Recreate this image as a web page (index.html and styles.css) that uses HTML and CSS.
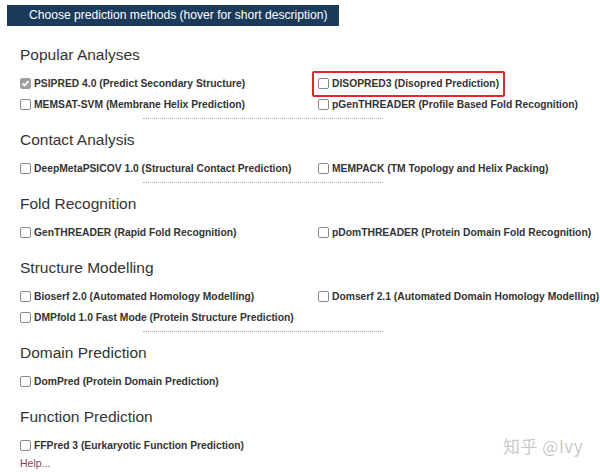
FILE: index.html
```html
<!DOCTYPE html>
<html>
<head>
<meta charset="utf-8">
<link rel="stylesheet" href="styles.css">
</head>
<body>
<div class="page">
  <div class="bar">Choose prediction methods (hover for short description)</div>

  <div class="section">
    <h2 class="title">Popular Analyses</h2>
    <div class="grid">
      <label class="item"><span class="box checked"><svg viewBox="0 0 10 10" width="9" height="9"><path d="M1.8 5.2 L4 7.4 L8.4 2.4" fill="none" stroke="#fff" stroke-width="1.8"/></svg></span>PSIPRED 4.0 (Predict Secondary Structure)</label>
      <label class="item highlight"><span class="box"></span>DISOPRED3 (Disopred Prediction)</label>
      <label class="item"><span class="box"></span>MEMSAT-SVM (Membrane Helix Prediction)</label>
      <label class="item"><span class="box"></span>pGenTHREADER (Profile Based Fold Recognition)</label>
    </div>
    <div class="divider"></div>
  </div>

  <div class="section">
    <h2 class="title">Contact Analysis</h2>
    <div class="grid">
      <label class="item"><span class="box"></span>DeepMetaPSICOV 1.0 (Structural Contact Prediction)</label>
      <label class="item"><span class="box"></span>MEMPACK (TM Topology and Helix Packing)</label>
    </div>
    <div class="divider"></div>
  </div>

  <div class="section">
    <h2 class="title">Fold Recognition</h2>
    <div class="grid">
      <label class="item"><span class="box"></span>GenTHREADER (Rapid Fold Recognition)</label>
      <label class="item"><span class="box"></span>pDomTHREADER (Protein Domain Fold Recognition)</label>
    </div>
  </div>

  <div class="section">
    <h2 class="title">Structure Modelling</h2>
    <div class="grid">
      <label class="item"><span class="box"></span>Bioserf 2.0 (Automated Homology Modelling)</label>
      <label class="item"><span class="box"></span>Domserf 2.1 (Automated Domain Homology Modelling)</label>
      <label class="item"><span class="box"></span>DMPfold 1.0 Fast Mode (Protein Structure Prediction)</label>
    </div>
    <div class="divider"></div>
  </div>

  <div class="section">
    <h2 class="title">Domain Prediction</h2>
    <div class="grid">
      <label class="item"><span class="box"></span>DomPred (Protein Domain Prediction)</label>
    </div>
  </div>

  <div class="section last">
    <h2 class="title">Function Prediction</h2>
    <div class="grid">
      <label class="item"><span class="box"></span>FFPred 3 (Eurkaryotic Function Prediction)</label>
    </div>
    <a class="help" href="#">Help...</a>
  </div>

  <div class="watermark">知乎 @Ivy</div>
</div>
</body>
</html>
```

FILE: styles.css
```css
* { box-sizing: border-box; }
html, body {
  margin: 0;
  padding: 0;
  background: #fff;
}
body {
  font-family: "Liberation Sans", Arial, sans-serif;
  color: #333;
}
.page {
  position: relative;
  width: 600px;
  height: 472px;
  overflow: hidden;
  padding-top: 5px;
}
.bar {
  margin-left: 7px;
  width: 332px;
  height: 21px;
  line-height: 21px;
  background: #1c3a5b;
  color: #fff;
  font-size: 12.1px;
  padding-left: 22px;
  white-space: nowrap;
}
.section {
  padding-left: 20px;
  margin-bottom: 15px;
}
.bar + .section { margin-top: 19px; }
.title {
  margin: 0 0 8px 0;
  font-size: 15.5px;
  line-height: 20px;
  font-weight: normal;
  color: #333;
}
.grid {
  display: grid;
  grid-template-columns: 298px auto;
  grid-auto-rows: 21px;
}
.item {
  display: flex;
  align-items: center;
  font-size: 10.3px;
  font-weight: bold;
  color: #333;
  white-space: nowrap;
  position: relative;
}
.box {
  width: 11px;
  height: 11px;
  border: 1px solid #8a8a8a;
  border-radius: 2px;
  background: #fff;
  margin-right: 3px;
  margin-top: -1px;
  display: inline-flex;
  align-items: center;
  justify-content: center;
  flex: none;
}
.box.checked {
  background: #a0a0a0;
  border-color: #a0a0a0;
}
.highlight::before {
  content: "";
  position: absolute;
  left: -6px;
  top: -2px;
  width: 189px;
  height: 22px;
  border: 2px solid #e3262a;
  border-radius: 2px;
}
.divider {
  margin: 3px 0 -4px 123px;
  width: 240px;
  height: 0;
  border-top: 1px dotted #a8a8a8;
}
.help {
  display: block;
  font-size: 10.5px;
  line-height: 14px;
  margin-top: 0;
  color: #8e3b5f;
  text-decoration: none;
}
.watermark {
  position: absolute;
  left: 503px;
  top: 433px;
  font-family: "Noto Sans CJK SC", "Liberation Sans", sans-serif;
  font-size: 17px;
  color: rgba(150,150,150,0.55);
  letter-spacing: 0.5px;
}
```
